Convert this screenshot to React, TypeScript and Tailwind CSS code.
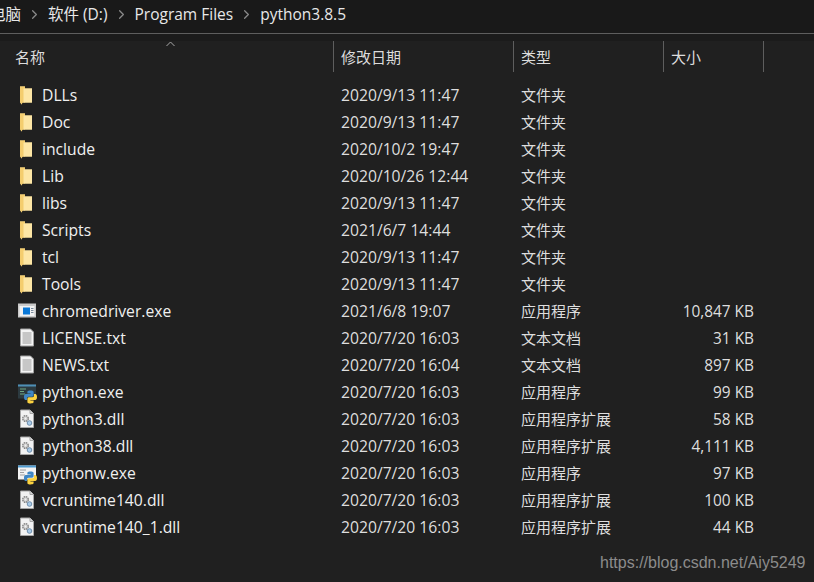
import React from 'react';
import { ChevronRight } from 'lucide-react';

type IconKind = 'folder' | 'app' | 'txt' | 'py' | 'dll' | 'pyw';

type FileRow = {
  name: string;
  date: string;
  type: string;
  size?: string;
  icon: IconKind;
};

const rows: FileRow[] = [
  { name: 'DLLs', date: '2020/9/13 11:47', type: '文件夹', icon: 'folder' },
  { name: 'Doc', date: '2020/9/13 11:47', type: '文件夹', icon: 'folder' },
  { name: 'include', date: '2020/10/2 19:47', type: '文件夹', icon: 'folder' },
  { name: 'Lib', date: '2020/10/26 12:44', type: '文件夹', icon: 'folder' },
  { name: 'libs', date: '2020/9/13 11:47', type: '文件夹', icon: 'folder' },
  { name: 'Scripts', date: '2021/6/7 14:44', type: '文件夹', icon: 'folder' },
  { name: 'tcl', date: '2020/9/13 11:47', type: '文件夹', icon: 'folder' },
  { name: 'Tools', date: '2020/9/13 11:47', type: '文件夹', icon: 'folder' },
  { name: 'chromedriver.exe', date: '2021/6/8 19:07', type: '应用程序', size: '10,847 KB', icon: 'app' },
  { name: 'LICENSE.txt', date: '2020/7/20 16:03', type: '文本文档', size: '31 KB', icon: 'txt' },
  { name: 'NEWS.txt', date: '2020/7/20 16:04', type: '文本文档', size: '897 KB', icon: 'txt' },
  { name: 'python.exe', date: '2020/7/20 16:03', type: '应用程序', size: '99 KB', icon: 'py' },
  { name: 'python3.dll', date: '2020/7/20 16:03', type: '应用程序扩展', size: '58 KB', icon: 'dll' },
  { name: 'python38.dll', date: '2020/7/20 16:03', type: '应用程序扩展', size: '4,111 KB', icon: 'dll' },
  { name: 'pythonw.exe', date: '2020/7/20 16:03', type: '应用程序', size: '97 KB', icon: 'pyw' },
  { name: 'vcruntime140.dll', date: '2020/7/20 16:03', type: '应用程序扩展', size: '100 KB', icon: 'dll' },
  { name: 'vcruntime140_1.dll', date: '2020/7/20 16:03', type: '应用程序扩展', size: '44 KB', icon: 'dll' },
];

const snakeHalf =
  'M6.4 0C3.2 0 3.4 1.4 3.4 1.400V3H6.600V3.500H2C2 3.500 0 3.300 0 6.500C0 9.700 1.800 9.600 1.800 9.600H3V8C3 8 2.900 6.200 4.700 6.200H8C8 6.200 9.600 6.200 9.600 4.600V1.600C9.600 1.600 9.900 0 6.400 0Z';

const PySnake = () => (
  <g transform="translate(6 9.5)">
    <path d={snakeHalf} fill="#3f86c4" />
    <path d={snakeHalf} fill="#fbd240" transform="rotate(180 6.5 6.5)" />
  </g>
);

const FileIcon = ({ kind }: { kind: IconKind }) => {
  if (kind === 'folder') {
    return (
      <svg width="24" height="24" viewBox="0 0 24 24">
        <path d="M2 2.500h5v2h7v14H4.500L3.500 20.500 2 18z" fill="#fbdf93" />
        <path d="M2 2.500h5v16H4.500L3.500 20.500 2 18z" fill="#f4cd6e" />
        <path d="M5.500 4.500h8.500v14H5.500z" fill="#fde6a5" />
      </svg>
    );
  }
  if (kind === 'app') {
    return (
      <svg width="24" height="24" viewBox="0 0 24 24">
        <rect x="0" y="3.500" width="18" height="14" fill="#c9c9c9" />
        <rect x="1.500" y="6" width="15" height="10" fill="#f2f2f2" />
        <rect x="5" y="7.500" width="7" height="7" fill="#0a78d7" />
        <path d="M13 8.500h2.500M13 10.500h2.500M13 12.500h2.500" stroke="#7a8a9a" strokeWidth="1" />
      </svg>
    );
  }
  if (kind === 'txt') {
    return (
      <svg width="24" height="24" viewBox="0 0 24 24">
        <path d="M2.500 2h10l3 3v14H2.500z" fill="#f4f4f4" stroke="#a0a0a0" />
        <path d="M4.500 6h9M4.500 8h9M4.500 10h9M4.500 12h9M4.500 14h9M4.500 16h9" stroke="#9a9a9a" strokeWidth="1" />
      </svg>
    );
  }
  if (kind === 'dll') {
    return (
      <svg width="24" height="24" viewBox="0 0 24 24">
        <path d="M2.500 2h9.500l3.500 3.500v14h-13z" fill="#f2f2f2" stroke="#a5a5a5" />
        <path d="M12 2v3.500h3.500" fill="#d8d8d8" stroke="#a5a5a5" />
        <circle cx="7.500" cy="10.500" r="2.800" fill="#d0d0d0" stroke="#808080" strokeWidth="1.300" strokeDasharray="1.500 0.700" />
        <circle cx="7.500" cy="10.500" r="0.900" fill="#f2f2f2" />
        <circle cx="11.500" cy="15" r="2.300" fill="#a9cbe8" stroke="#6f8fae" />
      </svg>
    );
  }
  if (kind === 'py') {
    return (
      <svg width="24" height="24" viewBox="0 0 24 24">
        <rect x="0" y="3.500" width="18" height="14" fill="#2c3a40" />
        <rect x="0" y="3.500" width="18" height="2" fill="#4f8fb5" />
        <path d="M2 8h6M2 10.500h4M2 13h5" stroke="#6fa884" strokeWidth="1" />
        <PySnake />
      </svg>
    );
  }
  return (
    <svg width="24" height="24" viewBox="0 0 24 24">
      <rect x="0" y="3.500" width="18" height="14" fill="#f3f3f3" />
      <rect x="0" y="3.500" width="18" height="2" fill="#4f9bd0" />
      <path d="M2 8h6M2 10.500h4M2 13h5" stroke="#a0a0a0" strokeWidth="1" />
      <PySnake />
    </svg>
  );
};

const font = "font-['Open_Sans','Noto_Sans_CJK_SC',sans-serif]";

const Crumb = ({ label }: { label: string }) => (
  <span className="text-[15.5px] leading-none text-[#e8e8e8]">{label}</span>
);

const Sep = () => <ChevronRight size={15} strokeWidth={2} className="mx-[6px] text-[#8a8a8a]" />;

export default function App() {
  return (
    <div className={`relative h-[582px] w-[814px] overflow-hidden bg-[#202020] ${font}`}>
      {/* address bar */}
      <div className="flex h-[33px] items-center bg-[#191919] pb-[4px]">
        <div className="ml-[-10px] flex items-center">
          <Crumb label="电脑" />
          <Sep />
          <Crumb label="软件 (D:)" />
          <Sep />
          <Crumb label="Program Files" />
          <Sep />
          <Crumb label="python3.8.5" />
        </div>
      </div>
      <div className="h-px bg-[#5e5e5e]" />
      <div className="h-[7px] bg-[#1b1b1b]" />

      {/* column headers */}
      <div className="relative flex h-[31px] items-center text-[15px] text-[#dcdcdc]">
        <div className="h-full w-[334px] border-r border-[#5e5e5e] pl-[15px] leading-[33px]">名称</div>
        <div className="h-full w-[180px] border-r border-[#5e5e5e] pl-[7px] leading-[33px]">修改日期</div>
        <div className="h-full w-[150px] border-r border-[#5e5e5e] pl-[7px] leading-[33px]">类型</div>
        <div className="h-full w-[100px] border-r border-[#5e5e5e] pl-[7px] leading-[33px]">大小</div>
        <svg className="absolute left-[165px] top-0" width="12" height="6" viewBox="0 0 12 6">
          <path d="M1.500 5 L5.500 1 L9.500 5" fill="none" stroke="#a8a8a8" strokeWidth="1" />
        </svg>
      </div>

      {/* file list */}
      <div className="mt-[10px] flex flex-col">
        {rows.map((row) => (
          <div key={row.name} className="flex h-[27px] items-center text-[15.7px] text-[#dedede]">
            <div className="flex w-[334px] items-center">
              <div className="ml-[18px] w-[24px] shrink-0">
                <FileIcon kind={row.icon} />
              </div>
              <span className="text-[#f0f0f0]">{row.name}</span>
            </div>
            <div className="w-[180px] pl-[7px]">{row.date}</div>
            <div className="w-[150px] pl-[7px] text-[15px]">{row.type}</div>
            <div className="w-[90px] text-right text-[15.4px]">{row.size}</div>
          </div>
        ))}
      </div>

      {/* watermark */}
      <div className="absolute left-[600px] top-[551px] font-['Liberation_Sans',sans-serif] text-[16px] text-[#8c8c8c]">
        https://blog.csdn.net/Aiy5249
      </div>
    </div>
  );
}
